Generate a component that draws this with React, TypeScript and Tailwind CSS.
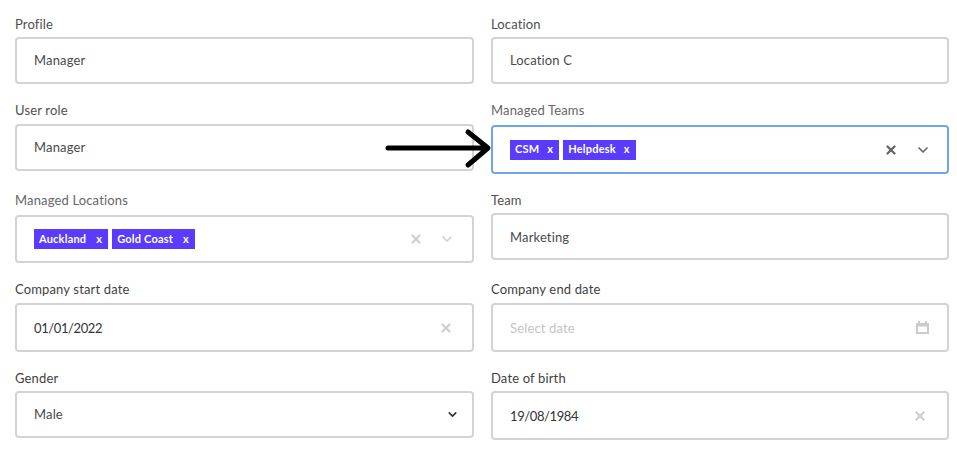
import { ChevronDown, X } from "lucide-react";

function ClearIcon({ className }: { className: string }) {
  return <X className={className} size={14} strokeWidth={4} />;
}

function CalendarIcon() {
  return (
    <svg width="15" height="15" viewBox="0 0 15 15" className="text-[#cbcbce]">
      <path d="M1 3h13v11H1z M3 1h2v2H3z M10 1h2v2h-2z" fill="currentColor" />
      <rect x="3" y="6.5" width="9" height="5.5" fill="#fff" />
    </svg>
  );
}

function Tag({ text, className }: { text: string; className: string }) {
  return (
    <span className={`flex h-5 items-center bg-[#5b3cff] pl-[5px] pr-1.5 text-[11px] font-bold tracking-[0.2px] text-white ${className}`}>
      {text}
      <span className="text-[11px]">x</span>
    </span>
  );
}

function Label({ text, className }: { text: string; className: string }) {
  return <label className={`block h-4 text-[13px] leading-4 tracking-[0.15px] ${className}`}>{text}</label>;
}

function Box({ className, focused, children }: { className: string; focused?: boolean; children: React.ReactNode }) {
  const border = focused ? "border-[#6ea6ee]" : "border-[#d2d2d8]";
  return (
    <div className={`flex items-center rounded border-2 bg-white pl-[17px] text-[13px] tracking-[0.15px] ${border} ${className}`}>
      {children}
    </div>
  );
}

export default function App() {
  return (
    <div className="relative h-[455px] w-[957px] overflow-hidden bg-white font-['Lato','Liberation_Sans',sans-serif] text-[#4a4a4a]">
      <div className="flex gap-[17px] pl-[15px] pt-4">
        <div className="w-[459px]">
          <Label text="Profile" className="mb-[5px] text-[#4f4f4f]" />
          <Box className="h-[47px]">Manager</Box>

          <Label text="User role" className="mb-1.5 mt-[18px] text-[#4f4f4f]" />
          <Box className="h-[47px]">Manager</Box>

          <Label text="Managed Locations" className="mb-[7px] mt-[21px] text-[#666]" />
          <Box className="h-12 justify-between pr-[17px]">
            <div className="flex gap-1">
              <Tag text="Auckland" className="gap-2.5" />
              <Tag text="Gold Coast" className="gap-2.5" />
            </div>
            <div className="flex items-center gap-4">
              <ClearIcon className="text-[#d0d0d0]" />
              <ChevronDown size={16} strokeWidth={2.5} className="text-[#d0d0d0]" />
            </div>
          </Box>

          <Label text="Company start date" className="mb-1.5 mt-[18px] text-[#3f3f3f]" />
          <Box className="h-[49px] justify-between pr-[19px]">
            <span className="pt-0.5 tracking-[-0.4px] text-[#333]">01/01/2022</span>
            <ClearIcon className="text-[#cfcfcf]" />
          </Box>

          <Label text="Gender" className="mb-[5px] mt-[18px] text-[#3f3f3f]" />
          <Box className="h-[47px] justify-between pr-[13px]">
            <span>Male</span>
            <ChevronDown size={13} strokeWidth={3} className="text-[#333]" />
          </Box>
        </div>

        <div className="w-[458px]">
          <Label text="Location" className="mb-[5px] text-[#4f4f4f]" />
          <Box className="h-[47px]">Location C</Box>

          <Label text="Managed Teams" className="mb-[7px] mt-[18px] text-[#666]" />
          <Box focused className="h-[49px] justify-between pr-4">
            <div className="flex gap-1">
              <Tag text="CSM" className="gap-2" />
              <Tag text="Helpdesk" className="gap-2" />
            </div>
            <div className="flex items-center gap-[17px]">
              <ClearIcon className="text-[#666]" />
              <ChevronDown size={16} strokeWidth={2.5} className="text-[#666]" />
            </div>
          </Box>

          <Label text="Team" className="mb-[5px] mt-[18px] text-[#4f4f4f]" />
          <Box className="h-[47px]">
            <span className="pt-0.5">Marketing</span>
          </Box>

          <Label text="Company end date" className="mb-1.5 mt-[21px] text-[#3f3f3f]" />
          <Box className="h-[49px] justify-between pr-[17px]">
            <span className="pt-0.5 text-[#c4c4c4]">Select date</span>
            <CalendarIcon />
          </Box>

          <Label text="Date of birth" className="mb-[5px] mt-[18px] text-[#3f3f3f]" />
          <Box className="h-[49px] justify-between pr-5">
            <span className="pt-0.5 tracking-[-0.4px] text-[#333]">19/08/1984</span>
            <ClearIcon className="text-[#cfcfcf]" />
          </Box>
        </div>
      </div>

      <svg width="110" height="44" viewBox="0 0 110 44" fill="none" className="absolute left-[383px] top-[126px]">
        <path d="M5 22H104M85 6l20 16-20 17" stroke="#000" strokeWidth="5" strokeLinecap="round" strokeLinejoin="round" />
      </svg>
    </div>
  );
}
